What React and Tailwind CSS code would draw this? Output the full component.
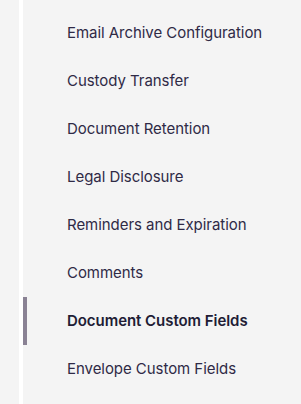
import React from 'react';

const items = [
  'Email Archive Configuration',
  'Custody Transfer',
  'Document Retention',
  'Legal Disclosure',
  'Reminders and Expiration',
  'Comments',
  'Document Custom Fields',
  'Envelope Custom Fields',
];

const ACTIVE = 'Document Custom Fields';

export default function App() {
  return (
    <div className="flex h-[404px] w-[301px] overflow-hidden bg-[#f4f4f4]" style={{ fontFamily: 'Inter, "Noto Sans", sans-serif' }}>
      <div className="w-[19px] shrink-0" />
      <div className="w-[4px] shrink-0 bg-white" />
      <nav className="flex flex-1 flex-col pt-[9px]">
        {items.map((label) => {
          const active = label === ACTIVE;
          return (
            <a
              key={label}
              href="#"
              className={`flex h-[48px] items-center border-l-4 pl-[40px] text-[15px] tracking-[-0.05px] ${
                active ? 'border-[#8a8294] font-semibold text-[#211c35]' : 'border-transparent text-[#2f2a46]'
              }`}
            >
              {label}
            </a>
          );
        })}
      </nav>
    </div>
  );
}
